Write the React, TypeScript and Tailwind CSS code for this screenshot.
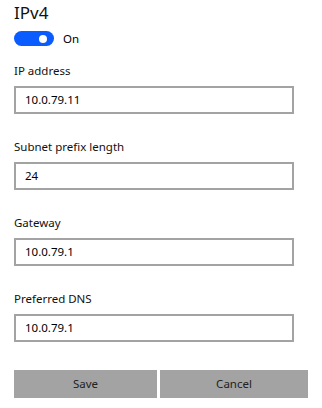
import React from "react";

const font = { fontFamily: '"Noto Sans", "Open Sans", sans-serif' };

function Field({ label, value, first }: { label: string; value: string; first?: boolean }) {
  return (
    <div className={first ? "mt-[17px]" : "mt-[25px]"}>
      <div className="text-[11.5px] leading-[16px] text-[#111]">{label}</div>
      <div className="mt-[7px] w-[280px] h-[28px] border-2 border-[#a3a3a3] bg-white flex items-center pl-[9px] text-[11.5px] text-black">
        {value}
      </div>
    </div>
  );
}

export default function App() {
  return (
    <div className="w-[322px] h-[408px] bg-white pt-[2px] px-[14px]" style={font}>
      <div className="text-[17px] leading-[21px] text-[#111]">IPv4</div>
      <div className="mt-[8px] flex items-center h-[15px]">
        <div className="w-[40px] h-[15px] rounded-full bg-[#0a5cff] flex items-center justify-end pr-[7px]">
          <div className="w-[8px] h-[8px] rounded-full bg-white" />
        </div>
        <span className="ml-[9px] text-[11.5px] leading-[16px] text-black">On</span>
      </div>
      <Field first label="IP address" value="10.0.79.11" />
      <Field label="Subnet prefix length" value="24" />
      <Field label="Gateway" value="10.0.79.1" />
      <Field label="Preferred DNS" value="10.0.79.1" />
      <div className="mt-[28px] flex gap-[3px]">
        <button className="w-[145px] h-[28px] bg-[#a3a3a3] text-[11.5px] text-[#222]">Save</button>
        <button className="w-[150px] h-[28px] bg-[#a3a3a3] text-[11.5px] text-[#222]">Cancel</button>
      </div>
    </div>
  );
}
